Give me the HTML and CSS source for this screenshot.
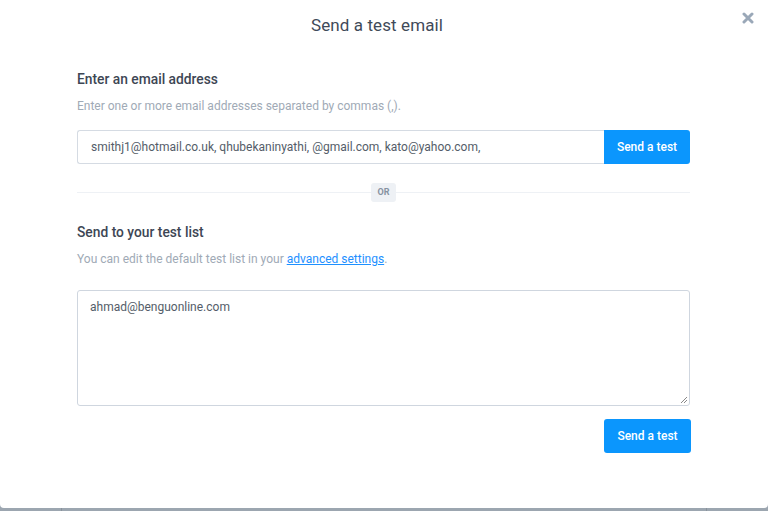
FILE: index.html
```html
<!DOCTYPE html>
<html>
<head>
<meta charset="utf-8">
<link rel="stylesheet" href="styles.css">
</head>
<body>
<div class="modal">
  <header class="modal-head">
    <h1 class="title">Send a test email</h1>
    <button class="close" aria-label="Close">
      <svg width="12" height="12" viewBox="0 0 12 12"><path d="M2 2 L10 10 M10 2 L2 10" stroke="#9aa8b8" stroke-width="3" stroke-linecap="round"/></svg>
    </button>
  </header>
  <div class="content">
    <h2 class="section-title">Enter an email address</h2>
    <p class="hint">Enter one or more email addresses separated by commas (,).</p>
    <div class="input-group">
      <div class="text-input">smithj1@hotmail.co.uk, qhubekaninyathi, @gmail.com, kato@yahoo.com,</div>
      <button class="btn btn-attached">Send a test</button>
    </div>
    <div class="divider"><span class="or">OR</span></div>
    <h2 class="section-title">Send to your test list</h2>
    <p class="hint">You can edit the default test list in your <a href="#" class="link">advanced settings</a>.</p>
    <div class="textarea">ahmad@benguonline.com
      <svg class="grip" width="8" height="8" viewBox="0 0 8 8"><path d="M7 1 L1 7 M7 4 L4 7" stroke="#888" stroke-width="1"/></svg>
    </div>
    <div class="actions"><button class="btn">Send a test</button></div>
  </div>
</div>
<div class="bottom-bar"><span class="seg seg-a"></span><span class="seg seg-b"></span></div>
</body>
</html>
```
FILE: styles.css
```css
* { box-sizing: border-box; }
html, body { margin: 0; padding: 0; }
body {
  width: 768px;
  height: 511px;
  overflow: hidden;
  background: #9ca6b0;
  font-family: Roboto, "Liberation Sans", sans-serif;
  display: flex;
  flex-direction: column;
}
.modal {
  background: #fff;
  height: 508px;
  border-radius: 0 0 4px 4px;
  position: relative;
}
.modal-head {
  height: 50px;
  display: flex;
  justify-content: center;
  align-items: center;
  padding-right: 14px;
}
.title {
  margin: 0;
  font-size: 17px;
  font-weight: 400;
  color: #3f4a59;
  letter-spacing: 0.1px;
  padding-bottom: 1px;
}
.close {
  position: absolute;
  top: 12px;
  right: 14px;
  width: 12px;
  height: 12px;
  border: 0;
  padding: 0;
  background: none;
  display: flex;
}
.content {
  padding: 20px 78px 0 77px;
}
.section-title {
  margin: 0;
  font-size: 13.8px;
  font-weight: 500;
  color: #3d4654;
  line-height: 18px;
}
.hint {
  margin: 9px 0 0;
  font-size: 12px;
  color: #a0aab6;
  line-height: 18px;
}
.link { color: #1e90ff; }
.input-group {
  margin-top: 15px;
  display: flex;
  height: 34px;
}
.text-input {
  flex: 1;
  border: 1px solid #d5dbe3;
  border-right: 0;
  border-radius: 3px 0 0 3px;
  padding: 0 13px;
  font-size: 12px;
  color: #545d69;
  line-height: 32px;
  white-space: nowrap;
  overflow: hidden;
}
.btn {
  background: #0b96fd;
  color: #fff;
  border: 0;
  border-radius: 3px;
  font-family: inherit;
  font-size: 12px;
  font-weight: 500;
  height: 34px;
  width: 87px;
  padding: 0;
}
.btn-attached { border-radius: 0 3px 3px 0; width: 86px; }
.divider {
  margin-top: 19px;
  height: 19px;
  display: flex;
  align-items: center;
  justify-content: center;
  background: linear-gradient(#eef1f5, #eef1f5) center / 100% 1px no-repeat;
}
.or {
  background: #eef1f5;
  color: #8793a2;
  font-size: 9px;
  font-weight: 700;
  padding: 0 7px;
  line-height: 19px;
  border-radius: 3px;
}
.divider + .section-title { margin-top: 21px; }
.textarea {
  margin-top: 22px;
  height: 116px;
  border: 1px solid #cfd6df;
  border-radius: 3px;
  padding: 8px 12px;
  font-size: 12px;
  color: #545d69;
  line-height: 16px;
  position: relative;
}
.grip { position: absolute; right: 1px; bottom: 1px; }
.actions {
  margin-top: 13px;
  display: flex;
  justify-content: flex-end;
  margin-right: -1px;
}
.bottom-bar {
  flex: 1;
  position: relative;
}
.seg { position: absolute; top: 0; bottom: 0; width: 1px; background: #8a939c; }
.seg-a { left: 61px; }
.seg-b { left: 706px; }
```
